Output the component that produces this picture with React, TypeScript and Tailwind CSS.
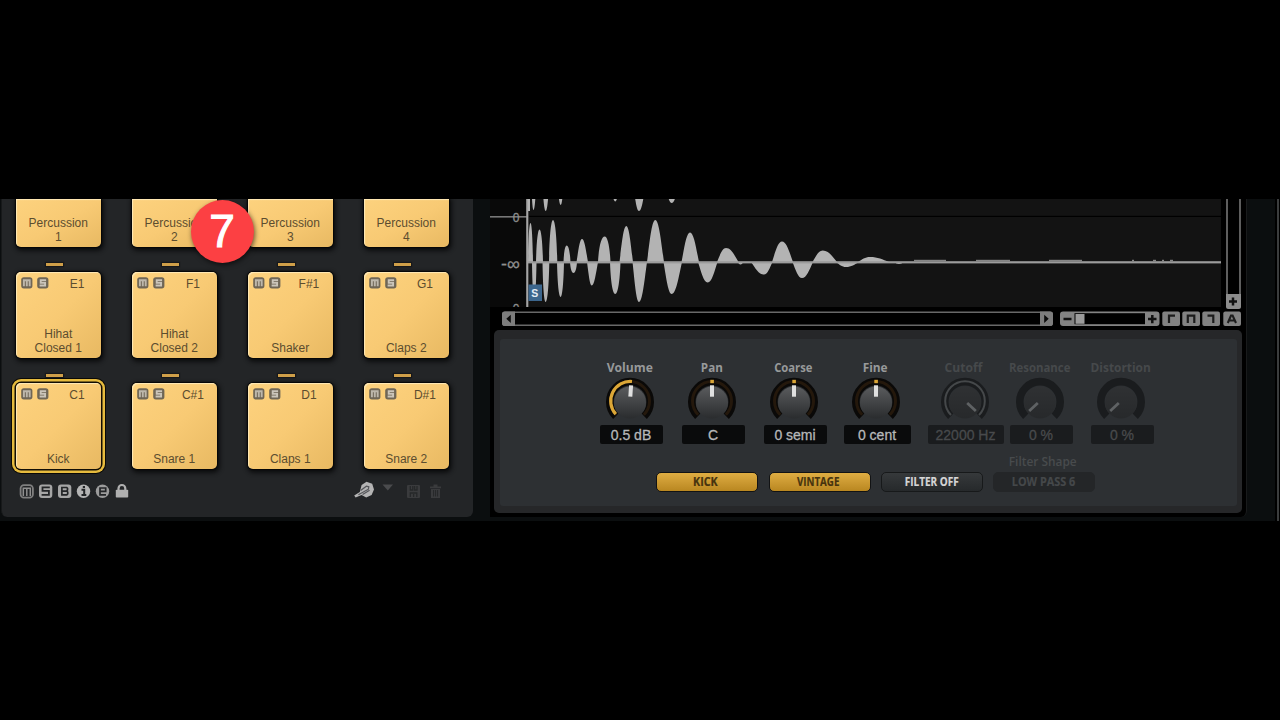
import type { ReactNode } from 'react';

interface PadData {
  name: string[];
  note?: string;
  selected?: boolean;
}

interface KnobData {
  label: string;
  value: string;
  angle: number;
  arc: 'left' | 'center' | 'full' | 'none';
  box: string;
  labelClass: string;
  disabled?: boolean;
}

const topPads: PadData[] = [
  { name: ['Percussion', '1'] },
  { name: ['Percussion', '2'] },
  { name: ['Percussion', '3'] },
  { name: ['Percussion', '4'] },
];

const middlePads: PadData[] = [
  { name: ['Hihat', 'Closed 1'], note: 'E1' },
  { name: ['Hihat', 'Closed 2'], note: 'F1' },
  { name: ['Shaker'], note: 'F#1' },
  { name: ['Claps 2'], note: 'G1' },
];

const bottomPads: PadData[] = [
  { name: ['Kick'], note: 'C1', selected: true },
  { name: ['Snare 1'], note: 'C#1' },
  { name: ['Claps 1'], note: 'D1' },
  { name: ['Snare 2'], note: 'D#1' },
];

const knobs: KnobData[] = [
  { label: 'Volume', value: '0.5 dB', angle: 4, arc: 'left', box: 'w-[63px]', labelClass: 'scale-x-[0.97]' },
  { label: 'Pan', value: 'C', angle: 0, arc: 'center', box: 'w-[63px] ml-[19px]', labelClass: 'scale-x-[0.93]' },
  { label: 'Coarse', value: '0 semi', angle: 0, arc: 'center', box: 'w-[63px] ml-[19px]', labelClass: 'scale-x-[0.9]' },
  { label: 'Fine', value: '0 cent', angle: 0, arc: 'center', box: 'w-[67px] ml-[17px]', labelClass: 'scale-x-[0.95]' },
  { label: 'Cutoff', value: '22000 Hz', angle: 133, arc: 'full', box: 'w-[76px] ml-[17px]', labelClass: 'scale-x-[0.97]', disabled: true },
  { label: 'Resonance', value: '0 %', angle: -133, arc: 'none', box: 'w-[63px] ml-[6px]', labelClass: 'scale-x-[0.91]', disabled: true },
  { label: 'Distortion', value: '0 %', angle: -133, arc: 'none', box: 'w-[63px] ml-[18px]', labelClass: 'scale-x-[0.95]', disabled: true },
];

// [start, peak, end, peak height] measured from the zero line
const lowerLobes = [
  [528, 530.5, 533, -39], [532, 534.3, 536.5, 36], [536, 539.5, 543, -32.5],
  [542.5, 545.7, 549.3, 40], [549, 553, 557.3, -42], [557, 560.7, 564, 35],
  [563.5, 566.7, 570.5, -16.5], [570, 573.5, 577, 11], [576.5, 582, 588, -23],
  [587, 591.7, 598, 23.5], [598, 604.7, 610.5, -25.5], [610, 615.3, 620.5, 32],
  [619.5, 626.3, 633, -36], [632.5, 639, 647, 40], [647, 655.3, 664, -42],
  [663.5, 671.7, 682, 32], [681.5, 690, 699, -29.5], [698, 707.7, 717.5, 20.5],
  [717, 726, 738.5, -14], [738, 740.5, 743, 2.5], [751, 764, 772.5, 12.5],
  [772, 782, 793, -20.5], [792.5, 802, 813, 16], [812.5, 822.7, 837, -11.5],
  [836, 846, 859, 5], [858, 870, 889, -5], [895, 899, 903, 2],
];

const upperLobes = [
  [531, 533.5, 536.5, 47], [542, 545.7, 549.5, 48], [557, 560.7, 564, 42],
  [610, 615.3, 620, 38.5], [631, 639, 648, 48], [662, 671.7, 682, 40],
];

const tailBars = [
  [914, 32], [976, 34], [1049, 33], [1132, 2], [1153, 3], [1162, 2], [1170, 3],
];

function lobePath(lobes: number[][], zero: number) {
  return lobes
    .map(([start, peak, end, height]) => {
      const tip = zero + height;
      const left = peak - start;
      const right = end - peak;
      // short lobes rise almost straight up, long ones follow a sine
      const narrow = right < 6;
      const foot = narrow ? 0.12 : 0.34;
      const bend = narrow ? 0.5 : 0.42;
      const shoulder = zero + height * (narrow ? 0.6 : 0.5);
      return `M${start} ${zero}C${start + left * foot} ${shoulder} ${peak - left * bend} ${tip} ${peak} ${tip}C${peak + right * bend} ${tip} ${end - right * foot} ${shoulder} ${end} ${zero}Z`;
    })
    .join('');
}

function MiniIcon({ letter }: { letter: 'm' | 's' }) {
  return (
    <svg width="12" height="12" viewBox="0 0 12 12" fill="none">
      <rect x="0.2" y="0.2" width="11.2" height="11.2" rx="2.6" fill="#6f6656" />
      {letter === 'm' ? (
        <path d="M2.9 9.2V3.3H8.7V9.2M5.8 3.4V9.2" stroke="#bdb7ab" strokeWidth="1.9" />
      ) : (
        <path d="M9.1 3.2H3.7V5.9H8.1V8.5H2.6" stroke="#cbc5ba" strokeWidth="1.9" />
      )}
    </svg>
  );
}

function Pad({ pad, cropped }: { pad: PadData; cropped?: boolean }) {
  const ring = pad.selected
    ? 'shadow-[0_0_0_1.5px_#120e05,0_0_0_4px_#e6bb3e,0_0_0_5px_#0a0906]'
    : 'shadow-[0_0_1px_1px_#060606,1px_2px_4px_2px_#0d0e0f]';
  return (
    <div
      className={`relative flex w-[85.4px] flex-col justify-between bg-linear-to-br from-[#fdd27e] via-[#f8ca74] to-[#e8b962] text-[#5c4d2f] ${ring} ${cropped ? 'h-12 rounded-b-[5px]' : 'h-[86px] rounded-[5px]'}`}
    >
      <div className={`pointer-events-none absolute inset-0 shadow-[inset_1px_1px_1px_#ffeab9] ${cropped ? 'rounded-b-[5px]' : 'rounded-[5px]'}`} />
      {pad.note ? (
        <div className="flex justify-between pt-[5px] pr-[7px] pl-[5px] leading-none">
          <div className="flex gap-1">
            <MiniIcon letter="m" />
            <MiniIcon letter="s" />
          </div>
          <span className="w-[34px] pt-[1px] text-center text-xs leading-3">{pad.note}</span>
        </div>
      ) : (
        <span />
      )}
      <div className="pb-[3px] text-center text-xs leading-[14px]">
        {pad.name.map((line) => (
          <div key={line}>{line}</div>
        ))}
      </div>
    </div>
  );
}

function PadRow({ pads, cropped }: { pads: PadData[]; cropped?: boolean }) {
  return (
    <div className="flex gap-[30.6px] pl-[13.6px]">
      {pads.map((pad) => (
        <Pad key={pad.name.join(' ')} pad={pad} cropped={cropped} />
      ))}
    </div>
  );
}

function DashRow() {
  return (
    <div className="flex h-[25px] gap-[99px] pt-[15.5px] pl-[44px]">
      {[0, 1, 2, 3].map((i) => (
        <span key={i} className="h-[3px] w-[17px] bg-[#cf9f49] shadow-[0_0_1px_1px_#17181a]" />
      ))}
    </div>
  );
}

function PadToolbar() {
  return (
    <div className="flex items-center justify-between pt-[12px] pr-[30px] pl-[15.5px]">
      <svg width="112" height="18" viewBox="0 0 112 18" fill="none">
        <rect x="2.6" y="3.2" width="12.3" height="12.5" rx="3.4" stroke="#7f7f7f" strokeWidth="1.8" />
        <path d="M5.3 14V6.2H12.3V14M8.8 6.5V14" stroke="#8f8f8f" strokeWidth="1.5" />
        <rect x="21" y="2.5" width="13.3" height="13.5" rx="3" fill="#a6a6a6" />
        <path d="M31.8 5.4H24.5V8.8H30.9V12.8H23.6" stroke="#232527" strokeWidth="1.8" />
        <rect x="40" y="2.5" width="13.3" height="13.5" rx="3" fill="#a6a6a6" />
        <path d="M43.9 5.5H48.7L49.5 6.3V8L48.7 9L49.7 10V12L48.8 12.9H43.9ZM43.9 9.2H48.7" stroke="#232527" strokeWidth="1.7" />
        <circle cx="65.5" cy="9.3" r="6.7" fill="#b4b4b4" />
        <path d="M63.5 7.8H66.2V12.8M63.5 13H68.3M64.8 5H67" stroke="#232527" strokeWidth="2" />
        <circle cx="84.5" cy="9.3" r="6.7" fill="#9c9c9c" />
        <path d="M88 12.8H82V6H87.7V9.3H82.2" stroke="#232527" strokeWidth="1.7" />
        <path d="M100.5 9V6.4a3.4 3.4 0 0 1 6.8 0V9" stroke="#b0b0b0" strokeWidth="2.2" />
        <rect x="97.8" y="7.7" width="12.4" height="7.8" rx="0.8" fill="#b0b0b0" />
      </svg>
      <svg width="90" height="20" viewBox="0 0 90 20" fill="none">
        <path d="M8.6 4L13.5 0.8L19.2 2.8L21 8.6L18.6 14L13.2 16.4L8.6 14L2.6 16.6L1.2 14.4L6.8 11Z" fill="#b4b4b4" />
        <path d="M5.4 13.8L15.4 8.2L15.8 5.8L13.4 5.2L7.6 9.6M9.6 13.6L16.6 9.2" stroke="#55565a" strokeWidth="1.2" />
        <path d="M29.5 3.5H40L34.8 9.6Z" fill="#4a4b4d" />
        <rect x="54" y="4" width="13" height="13" rx="1" fill="#3a3b3d" />
        <path d="M57.3 5V9H59.8V5M61.6 5V9H64V5M57.3 16V12H63.8V16M60.6 13V16" stroke="#262829" strokeWidth="1.3" />
        <path d="M77 5.5H88V7.3H77ZM80.5 3.5H84.5V5.5H80.5ZM78 8H87V17H78Z" fill="#3a3b3d" />
        <path d="M80.6 9V15.5M82.6 9V15.5M84.6 9V15.5" stroke="#262829" strokeWidth="1" />
      </svg>
    </div>
  );
}

function PadPanel() {
  return (
    <section className="ml-px h-[318px] w-[472px] rounded-b-md border-l border-[#17191a] bg-[#232527]">
      <PadRow pads={topPads} cropped />
      <DashRow />
      <PadRow pads={middlePads} />
      <DashRow />
      <PadRow pads={bottomPads} />
      <PadToolbar />
    </section>
  );
}

function Waveform() {
  return (
    <svg className="block" width="731" height="108" viewBox="490 199 731 108">
      <rect x="490" y="199" width="37" height="108" fill="#090909" />
      <rect x="529" y="199" width="692" height="108" fill="#131313" />
      <rect x="529" y="215.8" width="692" height="1.2" fill="#000" />
      <rect x="490" y="216" width="37" height="1.6" fill="#777" />
      <path d={lobePath(upperLobes, 163)} fill="#b3b3b3" />
      <path d={lobePath(lowerLobes, 262)} fill="#b3b3b3" />
      <rect x="528" y="261.2" width="693" height="2.2" fill="#9c9c9c" />
      {tailBars.map(([x, width]) => (
        <rect key={x} x={x} y="259.8" width={width} height="1.6" fill="#868686" />
      ))}
      <rect x="526.2" y="199" width="2.2" height="108" fill="#a5a5a5" />
      <rect x="528" y="199" width="2" height="12" fill="#b3b3b3" />
      <g className="font-['Liberation_Sans',sans-serif] text-[12px]" fill="#8f8f8f" stroke="#8f8f8f" strokeWidth="0.3">
        <text x="512.8" y="222">0</text>
        <text x="512.8" y="313">0</text>
        <text x="501" y="270" className="text-[18px]" strokeWidth="0.3">-∞</text>
      </g>
      <rect x="528.5" y="284.5" width="13.5" height="16.5" fill="#3c668d" />
      <text x="531.2" y="297.3" fill="#e4edf5" className="font-['Liberation_Sans',sans-serif] text-[10.5px] font-bold">S</text>
    </svg>
  );
}

function VerticalZoom() {
  return (
    <div className="ml-[5.4px] flex h-[110px] w-[15px] flex-col justify-end rounded-b-sm border-x-2 border-[#5e5e5e] bg-black">
      <svg className="-mx-[2px]" width="15" height="15" viewBox="0 0 15 15">
        <path d="M0 0H15V12.5Q15 15 12.5 15H2.5Q0 15 0 12.5Z" fill="#8c8c8c" />
        <path d="M7 3.5V11.5M3 7.5H11" stroke="#111" strokeWidth="2.5" />
      </svg>
    </div>
  );
}

function ToolButton({ children }: { children: ReactNode }) {
  return (
    <svg className="ml-[2px] shrink-0" width="18.3" height="15" viewBox="0 0 18.3 15" fill="none">
      <rect x="0.3" y="0.5" width="17.7" height="14.4" rx="2" fill="#828282" />
      {children}
    </svg>
  );
}

function ScrollRow() {
  return (
    <div className="flex h-[15px] pl-[12px]">
      <svg width="551" height="15" viewBox="0 0 551 15">
        <rect x="0.8" y="1.2" width="549.4" height="13" rx="2" fill="#000" stroke="#686868" strokeWidth="1.6" />
        <path d="M3 0.4H13V15H3Q0 15 0 12V3Q0 0.4 3 0.4Z" fill="#7d7d7d" />
        <path d="M538 0.4H548Q551 0.4 551 3V12Q551 15 548 15H538Z" fill="#7d7d7d" />
        <path d="M8.8 3.7V11.9L4.3 7.8ZM542.2 3.7V11.9L546.7 7.8Z" fill="#0b0b0b" />
      </svg>
      <svg className="ml-[6.7px]" width="100" height="15" viewBox="0 0 100 15">
        <rect y="0.4" width="99.5" height="14.6" rx="3" fill="#838383" />
        <rect x="14.5" y="2.2" width="70.5" height="11" fill="#000" />
        <rect x="15.5" y="3" width="9" height="9.8" fill="#9b9b9b" />
        <path d="M3.5 8H11.5M88 8H96.5M92.3 3.9V12.2" stroke="#111" strokeWidth="2.5" />
      </svg>
      <ToolButton>
        <path d="M7 12V4.7H13" stroke="#1c1c1c" strokeWidth="2.2" />
      </ToolButton>
      <ToolButton>
        <path d="M5.8 12V4.7H12.3V12" stroke="#1c1c1c" strokeWidth="2.2" />
      </ToolButton>
      <ToolButton>
        <path d="M5.5 4.7H11.3V12" stroke="#1c1c1c" strokeWidth="2.2" />
      </ToolButton>
      <ToolButton>
        <path d="M4.8 12L8 4.5H9.6L13 12M6.3 9.5H11.8" stroke="#1c1c1c" strokeWidth="2.1" />
      </ToolButton>
    </div>
  );
}

function Knob({ knob }: { knob: KnobData }) {
  const off = knob.disabled;
  const gradient = off ? 'url(#cap-off)' : 'url(#cap)';
  return (
    <svg className="block" width="50" height="48" viewBox="-25 -24 50 48" fill="none">
      <defs>
        <linearGradient id="cap" x1="0" y1="0" x2="0" y2="1">
          <stop offset="0" stopColor="#5a5b5d" />
          <stop offset="0.5" stopColor="#424446" />
          <stop offset="1" stopColor="#2a2c2e" />
        </linearGradient>
        <linearGradient id="cap-off" x1="0" y1="0" x2="0" y2="1">
          <stop offset="0" stopColor="#2f3133" />
          <stop offset="1" stopColor="#27292b" />
        </linearGradient>
      </defs>
      <path d="M-14.2 15.2A20.2 20.2 0 1 1 14.2 15.2" stroke={off ? '#1a1c1e' : '#0a0908'} strokeWidth="7.6" />
      {!off && <path d="M-13.8 13.8A19.5 19.5 0 1 1 13.8 13.8" stroke="#24180c" strokeWidth="3" />}
      {knob.arc === 'left' && <path d="M-14.2 13.2A19.6 19.6 0 0 1 2 -19.5" stroke="#dca737" strokeWidth="3.2" />}
      {knob.arc === 'center' && <path d="M-1.7 -19.5H1.9" stroke="#d9a536" strokeWidth="3.4" />}
      {knob.arc === 'full' && <path d="M-14 14A19.8 19.8 0 1 1 14 14" stroke="#45484a" strokeWidth="2" />}
      <circle cy="1.5" r="16" fill={gradient} />
      <path
        d={off ? 'M0 -14.8V-3' : 'M0 -15.7V-4.3'}
        transform={`rotate(${knob.angle})`}
        stroke={off ? '#5f6264' : '#e0e0e0'}
        strokeWidth={off ? 2.8 : 4}
      />
    </svg>
  );
}

function KnobControl({ knob }: { knob: KnobData }) {
  return (
    <div className={`flex shrink-0 flex-col items-center ${knob.box}`}>
      <span
        className={`mr-[4px] h-[16px] whitespace-nowrap font-['Open_Sans',sans-serif] text-[12.5px] leading-4 font-bold ${knob.labelClass} ${knob.disabled ? 'text-[#46494b]' : 'text-[#97999a]'}`}
      >
        {knob.label}
      </span>
      <div className="mt-[1px] mr-[3px] h-[47.5px]">
        <Knob knob={knob} />
      </div>
      <span
        className={`relative h-[19.5px] w-full rounded-[2px] pr-px text-center text-sm leading-[20px] [-webkit-text-stroke:0.3px_currentColor] ${knob.disabled ? 'bg-[#1a1c1e] text-[#484a4c]' : 'bg-[#0a0b0c] text-[#b6b7b8]'}`}
      >
        {knob.value}
      </span>
    </div>
  );
}

function SwitchButton({ label, tone, stretch }: { label: string; tone: 'on' | 'off' | 'disabled'; stretch: string }) {
  const tones = {
    on: 'border-[#121314] bg-linear-to-b from-[#dfad42] to-[#b98720] text-[#46330e]',
    off: 'border-[#17191a] bg-linear-to-b from-[#36393b] to-[#26292b] text-[#d6d6d6]',
    disabled: 'border-[#242628] bg-[#242628] text-[#45484a]',
  };
  return (
    <div className={`flex h-5 w-[102px] items-center justify-center rounded-[5px] border-[1.5px] ${tones[tone]}`}>
      <span
        className={`whitespace-nowrap font-['Open_Sans',sans-serif] text-[12.5px] leading-none font-bold [-webkit-text-stroke:0.2px_currentColor] ${stretch}`}
      >
        {label}
      </span>
    </div>
  );
}

function ControlPanel() {
  return (
    <div className="mt-1 ml-1 h-[183px] w-[748px] rounded-[5px] bg-[#262729] pt-[9px] pl-[6px]">
      <div className="h-[167px] w-[737px] rounded-[3px] bg-[#2d3033] pt-[21px]">
        <div className="flex pl-[100px]">
          {knobs.map((knob) => (
            <KnobControl key={knob.label} knob={knob} />
          ))}
        </div>
        <div className="mt-[9px] flex items-end gap-[10.3px] pl-[156.4px]">
          <SwitchButton label="KICK" tone="on" stretch="mr-[5px] scale-x-[0.86]" />
          <SwitchButton label="VINTAGE" tone="on" stretch="mr-[3px] scale-x-[0.78]" />
          <SwitchButton label="FILTER OFF" tone="off" stretch="scale-x-[0.8]" />
          <div className="flex flex-col items-center">
            <span className="mr-[3px] mb-[1px] scale-x-[0.95] font-['Open_Sans',sans-serif] text-[12.5px] leading-[18px] font-semibold text-[#484b4d]">
              Filter Shape
            </span>
            <SwitchButton label="LOW PASS 6" tone="disabled" stretch="mr-[1px] scale-x-[0.87]" />
          </div>
        </div>
      </div>
    </div>
  );
}

function EditorPanel() {
  return (
    <section className="ml-[17px] h-[318px] w-[757px] rounded-br-md border-r border-[#191b1c] bg-black">
      <div className="flex h-[112px]">
        <Waveform />
        <VerticalZoom />
      </div>
      <ScrollRow />
      <ControlPanel />
    </section>
  );
}

function StepBadge() {
  return (
    <div className="absolute top-[1px] left-[190.5px] flex size-[63px] items-center justify-center rounded-full bg-[#fc4043] pb-px text-[46px] leading-none text-white shadow-[1px_2px_5px_#0009] [-webkit-text-stroke:1.1px_white]">
      7
    </div>
  );
}

export default function App() {
  return (
    <main className="flex h-screen w-screen flex-col justify-start overflow-hidden bg-black pt-[199px] font-['Liberation_Sans',Arial,sans-serif]">
      <div className="relative flex h-[322px] w-full overflow-hidden bg-[#0b0e0f]">
        <PadPanel />
        <EditorPanel />
        <div className="ml-auto h-full w-[5px] border-r border-black bg-black">
          <div className="ml-[2px] h-full w-[1.5px] bg-[#3b3d3e]" />
        </div>
        <StepBadge />
      </div>
    </main>
  );
}
